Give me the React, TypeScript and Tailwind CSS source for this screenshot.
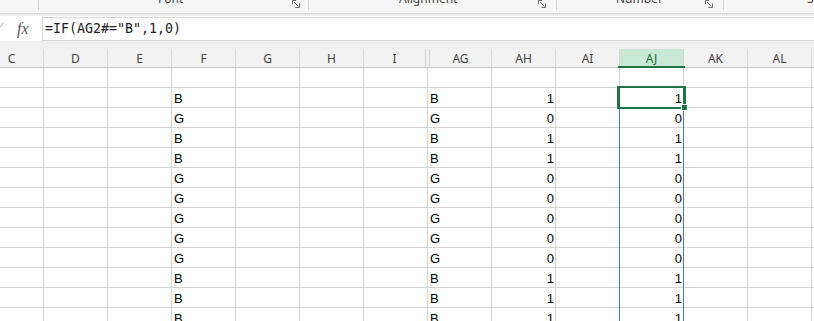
import React from 'react';

const letters = ['', 'B', 'G', 'B', 'B', 'G', 'G', 'G', 'G', 'G', 'B', 'B', 'B'];
const colNames = ['C', 'D', 'E', 'F', 'G', 'H', 'I', 'AG', 'AH', 'AI', 'AJ', 'AK', 'AL', 'AM'];

function Launcher() {
  return (
    <svg width="8" height="8" viewBox="0 0 8 8" className="block" fill="none" stroke="#6a6a6a" strokeWidth="1">
      <path d="M0.5 4V0.5H4" />
      <path d="M2 2L6.5 6.5" />
      <path d="M7.5 3.5V7.5H3.5" />
    </svg>
  );
}

function Sep() {
  return <div className="w-px h-[10px] shrink-0 bg-[#d2d2d2]" />;
}

function RibbonLabel({ text, cls }: { text: string; cls: string }) {
  return (
    <span className={`-mt-[9px] leading-[16px] text-[12px] text-[#444] whitespace-nowrap font-['Noto_Sans',sans-serif] ${cls}`}>
      {text}
    </span>
  );
}

function HeaderCell({ name }: { name: string }) {
  if (name === 'C') {
    return (
      <div className="w-[64px] ml-[-20px] shrink-0 border-r border-[#d9d9d9] flex items-center justify-center pt-[1px]">
        C
      </div>
    );
  }
  if (name === 'I') {
    return (
      <>
        <div className="w-[62px] shrink-0 border-r border-[#d0d0d0] flex items-center justify-center pt-[1px]">I</div>
        <div className="w-[3px] shrink-0" />
      </>
    );
  }
  if (name === 'AG') {
    return (
      <div className="w-[63px] shrink-0 border-l border-r border-l-[#d0d0d0] border-r-[#d9d9d9] flex items-center justify-center pt-[1px]">
        AG
      </div>
    );
  }
  if (name === 'AJ') {
    return (
      <div className="relative w-[64px] shrink-0 bg-[#cae9d5] border-r border-[#b9dcc6] text-[#1d6b40] flex items-center justify-center pt-[1px]">
        AJ
        <div className="absolute left-[-2px] right-[-2px] bottom-[-1px] h-[2px] bg-[#217346]" />
      </div>
    );
  }
  return (
    <div className="w-[64px] shrink-0 border-r border-[#d9d9d9] flex items-center justify-center pt-[1px]">
      {name}
    </div>
  );
}

function DataCell({ name, letter }: { name: string; letter: string }) {
  const base = 'w-[64px] h-[20px] shrink-0 border-r border-b border-[#d4d4d4] flex items-end leading-[16px]';
  if (name === 'C') return <div className={`${base} ml-[-20px]`} />;
  if (name === 'F' || name === 'AG') return <div className={`${base} pl-[2px]`}>{letter}</div>;
  if (name === 'AH' || name === 'AJ') {
    const v = letter === '' ? '' : letter === 'B' ? '1' : '0';
    return <div className={`${base} justify-end pr-[1px]`}>{v}</div>;
  }
  return <div className={base} />;
}

export default function App() {
  return (
    <div className="w-[814px] h-[321px] overflow-hidden bg-white flex flex-col font-['Liberation_Sans',Arial,sans-serif]">
      {/* Ribbon group labels (cropped) */}
      <div className="h-[13px] shrink-0 bg-[#f6f6f6] flex overflow-hidden">
        <div className="w-[38px] shrink-0" />
        <Sep />
        <div className="w-[269px] shrink-0 flex">
          <RibbonLabel text="Font" cls="ml-[119px]" />
          <div className="ml-auto mr-[8px]"><Launcher /></div>
        </div>
        <Sep />
        <div className="w-[247px] shrink-0 flex">
          <RibbonLabel text="Alignment" cls="ml-[90px]" />
          <div className="ml-auto mr-[10px]"><Launcher /></div>
        </div>
        <Sep />
        <div className="w-[166px] shrink-0 flex">
          <RibbonLabel text="Number" cls="ml-[59px]" />
          <div className="ml-auto mr-[10px]"><Launcher /></div>
        </div>
        <Sep />
        <div className="flex-1 flex">
          <RibbonLabel text="Styles" cls="ml-[83px]" />
        </div>
      </div>
      <div className="h-[3px] shrink-0 bg-gradient-to-b from-[#d6d6d6] to-[#f6f6f6]" />

      {/* Formula bar */}
      <div className="h-[25px] shrink-0 flex bg-white">
        <div className="w-[42px] shrink-0 flex items-start">
          <svg className="mt-[6px] shrink-0" width="4" height="6" viewBox="0 0 4 6">
            <path d="M0 5.5L3 1" stroke="#b8b8b8" strokeWidth="1" fill="none" />
          </svg>
          <span className="ml-[13px] mt-[4px] italic font-['Liberation_Serif',serif] text-[16px] text-[#555] leading-[18px]">
            fx
          </span>
        </div>
        <div className="flex-1 mt-[1px] h-[24px] border border-r-0 border-[#d8d8d8] pl-[2px] font-['DejaVu_Sans_Mono',monospace] text-[13.3px] leading-[22px] text-[#222] whitespace-nowrap">
          {'=IF(AG2#="B",1,0)'}
        </div>
      </div>
      <div className="h-[8px] shrink-0 bg-[#f0f0f0]" />

      {/* Grid */}
      <div className="relative flex-1 overflow-hidden">
        <div className="flex h-[19px] border-b border-[#c6c6c6] bg-[#f2f2f2] text-[12px] text-[#444] font-['Noto_Sans',sans-serif]">
          {colNames.map((c) => (
            <HeaderCell key={c} name={c} />
          ))}
        </div>
        <div className="text-[13px] text-black">
          {letters.map((l, i) => (
            <div key={i} className="flex h-[20px]">
              {colNames.map((c) => (
                <DataCell key={c} name={c} letter={l} />
              ))}
            </div>
          ))}
        </div>

        {/* Spill range border */}
        <div className="absolute left-[619px] top-[60px] w-[65px] bottom-0 border-l border-r border-[#4a72c2]" />
        {/* Active cell */}
        <div className="absolute left-[617px] top-[37px] w-[69px] h-[23px] border-x-[3px] border-y-2 border-[#217346]" />
        <div className="absolute left-[681px] top-[55px] w-[7px] h-[7px] border border-white bg-[#217346]" />
      </div>
    </div>
  );
}
